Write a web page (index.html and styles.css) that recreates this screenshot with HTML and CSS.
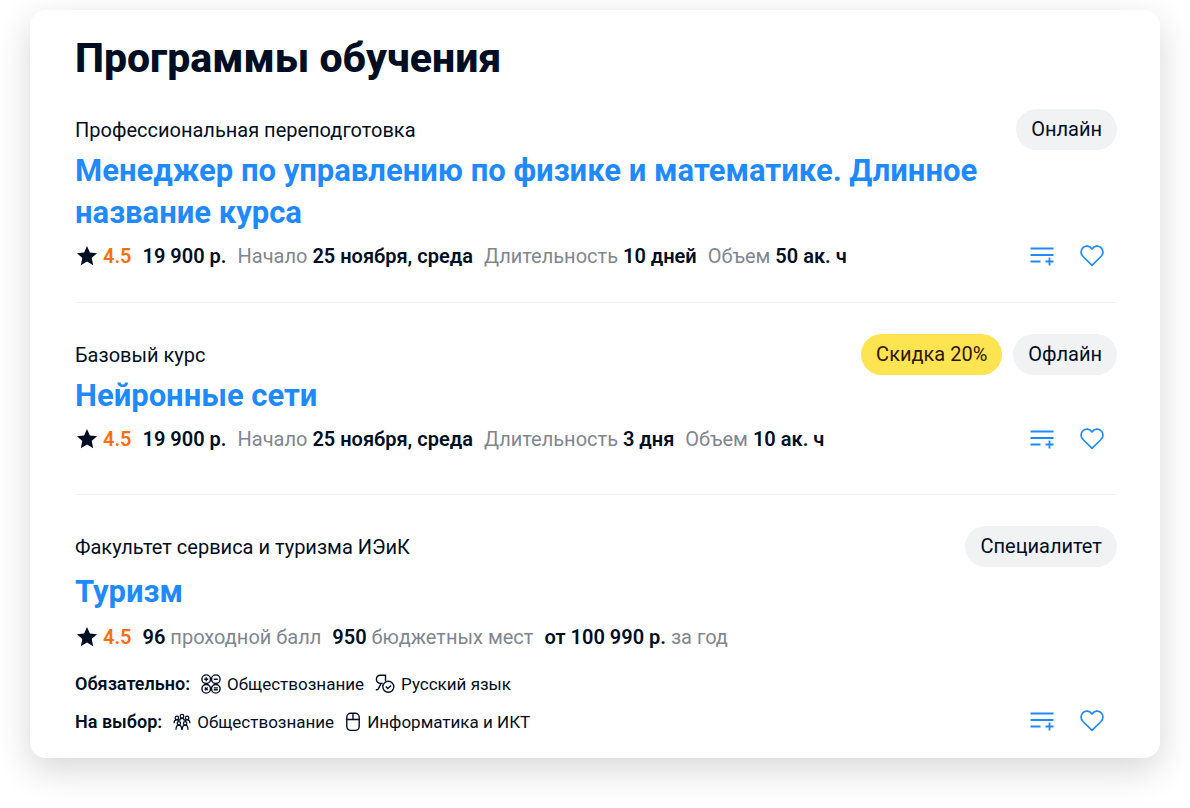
FILE: index.html
```html
<!DOCTYPE html>
<html lang="ru">
<head>
    <meta charset="UTF-8">
    <meta name="viewport" content="width=device-width, initial-scale=1.0">
    <title>Программы обучения</title>
    <link rel="stylesheet" href="styles.css">
</head>
<body>
    <!-- Общие иконки -->
    <svg class="sprite" aria-hidden="true">
        <symbol id="star" viewBox="0 0 20 20">
            <path fill="currentColor" d="M10 0l2.900 6.500 7.100.7-5.300 4.800 1.500 7.200-6.200-3.700-6.200 3.700 1.500-7.200L0 7.200l7.100-.7z"/>
        </symbol>
        <symbol id="list-add" viewBox="0 0 24 20">
            <path fill="none" stroke="currentColor" stroke-width="1.8" d="M.5 2.500h23M.5 9h23M.5 15.500h10M15.500 15.500h8M19.500 11.500v8"/>
        </symbol>
        <symbol id="heart" viewBox="0 0 24 22">
            <path fill="none" stroke="currentColor" stroke-width="1.7" stroke-linejoin="round" d="M12 20.300L3 11.500C.4 9 .4 4.900 3 2.600c2.500-2.300 6.700-2.100 9 1.300 2.300-3.400 6.500-3.600 9-1.300 2.600 2.300 2.600 6.400 0 8.900z"/>
        </symbol>
    </svg>

    <main class="card">
        <h1 class="card-title">Программы обучения</h1>

        <article class="program">
            <div class="program-header">
                <span class="category">Профессиональная переподготовка</span>
                <div class="badges">
                    <span class="badge">Онлайн</span>
                </div>
            </div>
            <h2 class="program-title"><a href="#">Менеджер по управлению по физике и математике. Длинное название курса</a></h2>
            <div class="program-footer">
                <div class="meta">
                    <span class="rating"><svg class="star"><use href="#star"/></svg>4.5</span>
                    <b>19 900 р.</b>
                    <span>Начало <b>25 ноября, среда</b></span>
                    <span>Длительность <b>10 дней</b></span>
                    <span>Объем <b>50 ак. ч</b></span>
                </div>
                <div class="actions">
                    <button class="icon-btn" type="button" aria-label="Добавить в список"><svg class="icon-list"><use href="#list-add"/></svg></button>
                    <button class="icon-btn" type="button" aria-label="В избранное"><svg class="icon-heart"><use href="#heart"/></svg></button>
                </div>
            </div>
        </article>

        <article class="program">
            <div class="program-header">
                <span class="category">Базовый курс</span>
                <div class="badges">
                    <span class="badge badge-sale">Скидка 20%</span>
                    <span class="badge">Офлайн</span>
                </div>
            </div>
            <h2 class="program-title"><a href="#">Нейронные сети</a></h2>
            <div class="program-footer">
                <div class="meta">
                    <span class="rating"><svg class="star"><use href="#star"/></svg>4.5</span>
                    <b>19 900 р.</b>
                    <span>Начало <b>25 ноября, среда</b></span>
                    <span>Длительность <b>3 дня</b></span>
                    <span>Объем <b>10 ак. ч</b></span>
                </div>
                <div class="actions">
                    <button class="icon-btn" type="button" aria-label="Добавить в список"><svg class="icon-list"><use href="#list-add"/></svg></button>
                    <button class="icon-btn" type="button" aria-label="В избранное"><svg class="icon-heart"><use href="#heart"/></svg></button>
                </div>
            </div>
        </article>

        <article class="program program-faculty">
            <div class="program-header">
                <span class="category">Факультет сервиса и туризма ИЭиК</span>
                <div class="badges">
                    <span class="badge">Специалитет</span>
                </div>
            </div>
            <h2 class="program-title"><a href="#">Туризм</a></h2>
            <div class="program-footer">
                <div class="details">
                    <div class="meta">
                        <span class="rating"><svg class="star"><use href="#star"/></svg>4.5</span>
                        <span><b>96</b> проходной балл</span>
                        <span><b>950</b> бюджетных мест</span>
                        <span><b>от 100 990 р.</b> за год</span>
                    </div>
                    <div class="exams">
                        <b>Обязательно:</b>
                        <span class="exam">
                            <svg class="exam-icon" viewBox="0 0 20 20">
                                <circle cx="5.200" cy="5.200" r="4.300"/>
                                <circle cx="14.800" cy="5.200" r="4.300"/>
                                <circle cx="5.200" cy="14.800" r="4.300"/>
                                <circle cx="14.800" cy="14.800" r="4.300"/>
                                <path d="M3.200 5.200h4M5.200 3.200v4M12.800 5.200h4M3.800 13.400l2.800 2.800M6.600 13.400l-2.800 2.800M12.800 13.900h4M12.800 15.800h4"/>
                            </svg>
                            Обществознание
                        </span>
                        <span class="exam">
                            <svg class="exam-icon" viewBox="0 0 20 20">
                                <path d="M.8 15.800h1.200c1 0 1.200-.5 1.600-1.400L6 9.600M10.500 7V1.200H5.700C0 1.200 0 9.400 5.700 9.400h2"/>
                                <circle cx="13.300" cy="12.800" r="5.500"/>
                                <path d="M10.800 12.600l2 2 3.300-3.100"/>
                            </svg>
                            Русский язык
                        </span>
                    </div>
                    <div class="exams">
                        <b>На выбор:</b>
                        <span class="exam">
                            <svg class="exam-icon exam-icon-people" viewBox="0 0 20 20">
                                <circle cx="10" cy="3.500" r="2"/>
                                <circle cx="4.300" cy="5.500" r="1.900"/>
                                <circle cx="15.700" cy="5.500" r="1.900"/>
                                <circle cx="6.500" cy="11.500" r="1.900"/>
                                <circle cx="13.500" cy="11.500" r="1.900"/>
                                <path d="M7.300 8.500C7.500 5 12.500 5 12.700 8.500M1.200 11.500c0-3 1.300-4 3.100-4 1.200 0 2 .4 2.500 1.200M18.800 11.500c0-3-1.300-4-3.100-4-1.200 0-2 .4-2.500 1.200M3.300 18.500c0-3 1.200-5 3.200-5s3.200 2 3.200 5M10.300 18.500c0-3 1.200-5 3.200-5s3.200 2 3.200 5"/>
                            </svg>
                            Обществознание
                        </span>
                        <span class="exam">
                            <svg class="exam-icon exam-icon-mouse" viewBox="0 0 16 20">
                                <rect x="1.800" y="1.200" width="12.400" height="17.200" rx="4"/>
                                <path d="M1.800 7.500h12.400M8 1.200v6.300"/>
                            </svg>
                            Информатика и ИКТ
                        </span>
                    </div>
                </div>
                <div class="actions">
                    <button class="icon-btn" type="button" aria-label="Добавить в список"><svg class="icon-list"><use href="#list-add"/></svg></button>
                    <button class="icon-btn" type="button" aria-label="В избранное"><svg class="icon-heart"><use href="#heart"/></svg></button>
                </div>
            </div>
        </article>
    </main>
</body>
</html>
```

FILE: styles.css
```css
* {
    margin: 0;
    padding: 0;
    box-sizing: border-box;
}

body {
    font-family: Roboto, 'Liberation Sans', sans-serif;
    font-size: 20px;
    color: #000e23;
    background: #fff;
    padding: 10px 30px 50px;
}

.sprite {
    display: none;
}

.card {
    background: #fff;
    border-radius: 16px;
    box-shadow: 0 12px 36px rgba(0, 0, 0, 0.16);
    padding: 24px 43px 24px 45px;
}

.card-title {
    font-size: 41px;
    font-weight: 800;
    line-height: 48px;
    margin-bottom: -4px;
}

.program {
    min-height: 192px;
    padding: 31px 0 33px;
    border-bottom: 1px solid #f0f2f4;
}

.program:last-child {
    padding-bottom: 0;
    border-bottom: none;
}

.program-header {
    display: flex;
    justify-content: space-between;
    align-items: center;
}

.category {
    line-height: 24px;
}

.badges {
    display: flex;
    gap: 11px;
}

.badge {
    padding: 0 15px;
    line-height: 41px;
    border-radius: 21px;
    background: #f1f2f4;
}

.badge-sale {
    background: #ffe452;
    color: #2e1500;
}

.program-title {
    padding-right: 100px;
    margin-bottom: 9px;
    font-size: 31px;
    font-weight: 700;
    line-height: 42px;
}

.program-title a {
    color: #1f8aff;
    text-decoration: none;
}

.program-faculty .program-title {
    margin-top: 4px;
    margin-bottom: 11px;
}

.program-footer {
    display: flex;
    justify-content: space-between;
    align-items: flex-end;
}

.meta {
    display: flex;
    flex-wrap: wrap;
    column-gap: 11px;
    line-height: 26px;
    color: #7f8691;
}

.meta b {
    font-weight: 600;
    color: #000e23;
}

.rating {
    display: flex;
    align-items: center;
    gap: 6px;
    padding-left: 2px;
    font-weight: 600;
    color: #ff6d0a;
}

.star {
    width: 20px;
    height: 20px;
    color: #000e23;
}

.exams {
    display: flex;
    flex-wrap: wrap;
    column-gap: 11px;
    margin-top: 14px;
    font-size: 18px;
    line-height: 24px;
}

.meta + .exams {
    margin-top: 22px;
}

.exams b {
    font-weight: 600;
}

.exam {
    display: flex;
    align-items: center;
    gap: 6px;
    font-size: 17px;
}

.exam-icon {
    width: 20px;
    height: 20px;
    fill: none;
    stroke: currentColor;
    stroke-width: 1.4;
}

.exam-icon-people {
    width: 18px;
}

.exam-icon-mouse {
    width: 16px;
}

.actions {
    display: flex;
    flex-shrink: 0;
}

.icon-btn {
    display: flex;
    justify-content: center;
    align-items: center;
    width: 50px;
    height: 26px;
    border: none;
    background: none;
    color: #1f8aff;
    cursor: pointer;
}

.icon-list {
    width: 24px;
    height: 20px;
}

.icon-heart {
    width: 24px;
    height: 22px;
}
```
